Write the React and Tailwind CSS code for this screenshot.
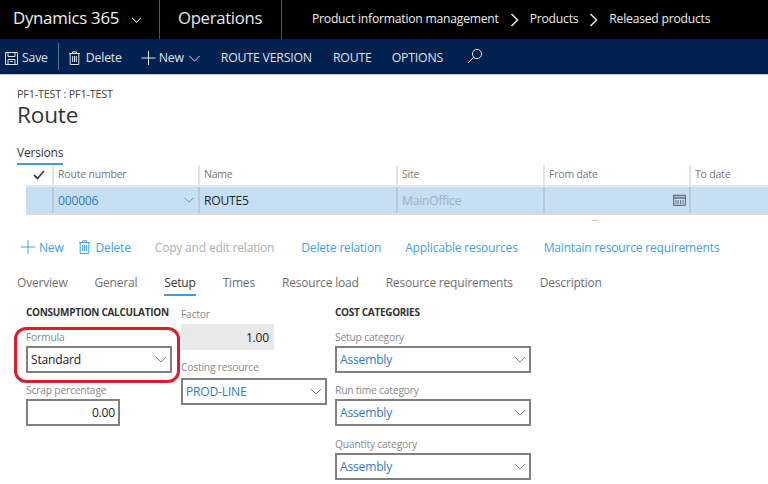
import React from "react";

const Chev = ({ className = "", w = 12, h = 7, sw = 1.1 }) => (
  <svg width={w} height={h} viewBox="0 0 14 8" fill="none" stroke="currentColor" strokeWidth={sw} className={className}>
    <path d="M1 1l6 6 6-6" />
  </svg>
);
const Right = () => (
  <svg width="9" height="14" viewBox="0 0 9 14" fill="none" stroke="currentColor" strokeWidth="1.5" className="text-[#e8e8e8]">
    <path d="M1.5 1l6 6-6 6" />
  </svg>
);
const Trash = ({ className = "" }) => (
  <svg width="11" height="14" viewBox="0 0 11 14" fill="none" stroke="currentColor" strokeWidth="1" className={className}>
    <path d="M0 2.5h11M3.5 2.5V.8h4v1.7M1.2 2.5v11h8.6v-11M3.7 5v6M5.5 5v6M7.3 5v6" />
  </svg>
);
const Plus = ({ className = "" }) => (
  <svg width="14" height="14" viewBox="0 0 14 14" fill="none" stroke="currentColor" strokeWidth="1" className={className}>
    <path d="M7 0v14M0 7h14" />
  </svg>
);

function Field({ label, value, blue, w, labelClass = "mb-[3px]" }) {
  return (
    <div className="flex flex-col" style={{ width: w }}>
      <div className={`text-[10.3px] leading-[11px] text-[#8a8a8a] ${labelClass}`}>{label}</div>
      <div className="h-[27px] border-2 border-[#808080] bg-white flex items-center justify-between pl-[3px] pr-[3px]">
        <span className={`pt-[2px] text-[12.1px] ${blue ? "text-[#2f7cc4]" : "text-[#222]"}`}>{value}</span>
        <Chev className="text-[#777]" />
      </div>
    </div>
  );
}

export default function App() {
  return (
    <div className="w-[768px] h-[484px] overflow-hidden bg-white font-['Open_Sans','Noto_Sans',sans-serif] tracking-[-0.2px]">
      <header className="h-[39px] bg-black text-white flex items-stretch">
        <div className="w-[160px] border-r border-[#555] flex items-center pl-[13px] gap-[12px] text-[#f0f0f0]">
          <span className="text-[16.8px] tracking-[-0.25px] pb-[3px]">Dynamics 365</span>
          <Chev w={11} h={6} sw={1.4} />
        </div>
        <div className="w-[122px] border-r border-[#555] flex items-center pl-[18px] text-[16.7px] text-[#e8e8e8] tracking-[-0.3px] pb-[3px]">
          Operations
        </div>
        <nav className="flex items-center pl-[30px] text-[12.15px] text-[#ececec] tracking-[-0.22px]">
          <span>Product information management</span>
          <span className="mx-[11px]"><Right /></span>
          <span>Products</span>
          <span className="mx-[11px]"><Right /></span>
          <span>Released products</span>
        </nav>
      </header>

      <div className="h-[36px] bg-[#002050] border-b border-[#b9c6d8] text-[#dfe6ef] flex items-center pl-[5px] pt-[3px] text-[12.3px]">
        <svg width="13" height="13" viewBox="0 0 13 13" fill="none" stroke="currentColor" strokeWidth="1">
          <path d="M.5.5h12v12H.5zM3 .5v4h7v-4M3 12.5v-5h7v5M5 9.5h3" />
        </svg>
        <span className="ml-[4px]">Save</span>
        <span className="ml-[10px] w-px h-[27px] -mt-[3px] bg-[#5a7090]" />
        <Trash className="ml-[10px]" />
        <span className="ml-[6px]">Delete</span>
        <Plus className="ml-[19px] w-[15px]" />
        <span className="ml-[3px]">New</span>
        <Chev className="ml-[4px]" w={13} />
        <span className="ml-[20px]">ROUTE VERSION</span>
        <span className="ml-[21px]">ROUTE</span>
        <span className="ml-[20px]">OPTIONS</span>
        <svg width="16" height="16" viewBox="0 0 16 16" fill="none" stroke="currentColor" strokeWidth="1" className="ml-[24px] -mt-[5px]">
          <circle cx="10" cy="6" r="4.6" />
          <path d="M6.6 9.4L1 15" />
        </svg>
      </div>

      <div className="pl-[17px] pt-[12px]">
        <div className="text-[10.8px] leading-[13px] text-[#444]">PF1-TEST : PF1-TEST</div>
        <h1 className="text-[22.6px] leading-[29px] text-[#333] font-normal">Route</h1>
        <div className="mt-[16px] w-fit text-[12px] leading-[16px] pb-[2px] border-b-2 border-[#3f9ae0] text-[#333]">Versions</div>
      </div>

      <div className="ml-[26px]">
        <div className="flex h-[22px] text-[10.5px] text-[#777] border-b-2 border-[#e8e8e8]">
          <div className="w-[28px] border-r-2 border-[#e4e4e4] flex items-center justify-center pr-[1px]">
            <svg width="12" height="10" viewBox="0 0 12 10" fill="none" stroke="#444" strokeWidth="1.8"><path d="M1 5l3.5 3.5L11 1" /></svg>
          </div>
          <div className="w-[146px] border-r-2 border-[#e4e4e4] pl-[4px] flex items-center">Route number</div>
          <div className="w-[198px] border-r-2 border-[#e4e4e4] pl-[4px] flex items-center">Name</div>
          <div className="w-[147px] border-r-2 border-[#e4e4e4] pl-[4px] flex items-center">Site</div>
          <div className="w-[146px] border-r-2 border-[#e4e4e4] pl-[4px] flex items-center">From date</div>
          <div className="pl-[4px] flex items-center">To date</div>
        </div>
        <div className="flex h-[28px] bg-[#c6dff3] border-b-2 border-[#d6dde3] text-[12.1px] items-stretch">
          <div className="w-[28px] border-r-2 border-[#b5cadb]" />
          <div className="w-[146px] border-r-2 border-[#b5cadb] pl-[4px] pr-[4px] flex items-center justify-between text-[#2f7cc4]">
            <span className="pt-[3px]">000006</span>
            <Chev w={10} h={6} className="text-[#6b7d8c]" />
          </div>
          <div className="w-[198px] border-r-2 border-[#b5cadb] pl-[4px] pt-[3px] flex items-center text-[#222]">ROUTE5</div>
          <div className="w-[147px] border-r-2 border-[#b5cadb] pl-[4px] pt-[3px] flex items-center text-[#9fb0bd]">MainOffice</div>
          <div className="w-[146px] border-r-2 border-[#b5cadb] pr-[3px] flex items-center justify-end">
            <svg width="13" height="12" viewBox="0 0 13 12" fill="none" stroke="#66727d" strokeWidth="1">
              <path d="M.5 1.5h12v10H.5zM.5 4h12" strokeWidth="1.3" />
              <path d="M3 6v4M5.2 6v4M7.6 6v4M10 6v4" />
            </svg>
          </div>
          <div />
        </div>
      </div>
      <div className="text-[8px] leading-[6px] text-[#777] pl-[592px] tracking-normal h-[6px]">...</div>

      <div className="mt-[18px] pl-[21px] h-[16px] flex items-center text-[12.05px] text-[#46a0e6]">
        <Plus />
        <span className="ml-[4px] pt-[2px]">New</span>
        <Trash className="ml-[15px]" />
        <span className="ml-[6px] pt-[2px]">Delete</span>
        <span className="ml-[24px] pt-[2px] text-[#b0b0b0]">Copy and edit relation</span>
        <span className="ml-[27px] pt-[2px]">Delete relation</span>
        <span className="ml-[24px] pt-[2px]">Applicable resources</span>
        <span className="ml-[26px] pt-[2px]">Maintain resource requirements</span>
      </div>

      <div className="mt-[20px] pl-[17px] flex items-start text-[12.03px] leading-[16px] text-[#6f6f6f] h-[21px]">
        <span>Overview</span>
        <span className="ml-[27px]">General</span>
        <span className="ml-[27px] text-[#333] border-b-2 border-[#3f9ae0] h-[21px]">Setup</span>
        <span className="ml-[27px]">Times</span>
        <span className="ml-[27px]">Resource load</span>
        <span className="ml-[27px]">Resource requirements</span>
        <span className="ml-[27px]">Description</span>
      </div>

      <div className="flex items-start pl-[26px]">
        <div className="w-[155px]">
          <div className="text-[10px] font-bold text-[#333] leading-[14px] mt-[9px] tracking-[-0.3px] whitespace-nowrap">CONSUMPTION CALCULATION</div>
          <div className="relative mt-[13px]">
            <div className="absolute left-[-12px] top-[-5px] w-[166px] h-[56px] border-[3px] border-[#e01c2c] rounded-[12px]" />
            <Field label="Formula" value="Standard" w="146px" />
          </div>
          <div className="mt-[12px]">
            <div className="text-[10.3px] leading-[11px] mb-[3px] text-[#8a8a8a]">Scrap percentage</div>
            <div className="w-[94px] h-[27px] border-2 border-[#808080] flex items-center justify-end pt-[2px] pr-[3px] text-[12.1px] text-[#222]">0.00</div>
          </div>
        </div>
        <div className="w-[154px] pt-[11px]">
          <div className="text-[10.3px] leading-[14px] text-[#8a8a8a] mb-[3px]">Factor</div>
          <div className="w-[93px] h-[26px] bg-[#e9e9e9] flex items-center justify-end pt-[2px] pr-[5px] text-[12.1px] text-[#222]">1.00</div>
          <div className="mt-[12px]">
            <Field label="Costing resource" value="PROD-LINE" blue w="146px" labelClass="mb-[5px]" />
          </div>
        </div>
        <div className="flex flex-col gap-[12px] pt-[9px]">
          <div className="text-[10px] font-bold text-[#333] leading-[14px] mb-px tracking-[-0.3px]">COST CATEGORIES</div>
          <Field label="Setup category" value="Assembly" blue w="196px" />
          <Field label="Run time category" value="Assembly" blue w="196px" />
          <div className="mt-px">
            <Field label="Quantity category" value="Assembly" blue w="196px" />
          </div>
        </div>
      </div>
    </div>
  );
}
